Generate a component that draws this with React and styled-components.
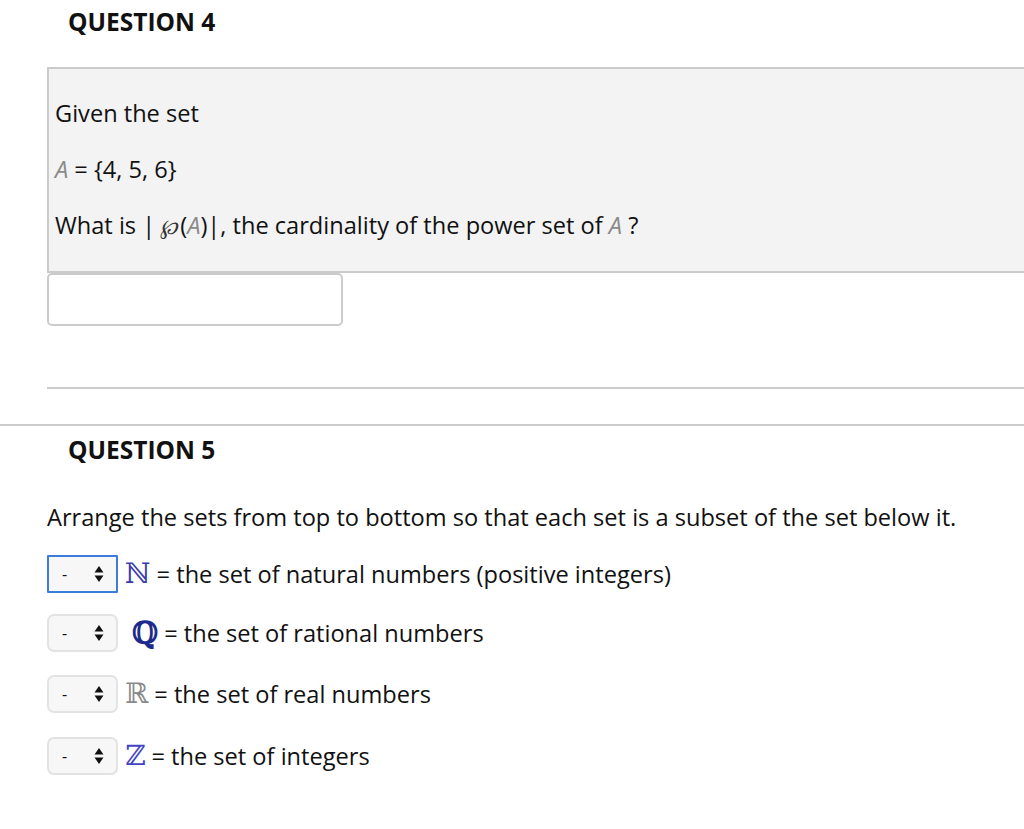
import React from 'react'
import styled, { createGlobalStyle } from 'styled-components'

const Global = createGlobalStyle`
  html, body {
    margin: 0;
    padding: 0;
    background: #fff;
    font-family: "Open Sans", "Liberation Sans", sans-serif;
    color: #111;
  }
`

const Page = styled.div`
  width: 1024px;
  overflow: hidden;
`

const Section = styled.div`
  padding-left: 47px;
  padding-top: ${p => p.top}px;
`

const Heading = styled.h2`
  margin: 0;
  padding-left: 21px;
  font-size: 24.5px;
  font-weight: 700;
  line-height: 44px;
  color: #111;
`

const QuestionBox = styled.div`
  margin-top: 23px;
  background: #f3f3f3;
  border-top: 2px solid #cbcbcb;
  border-left: 2px solid #cbcbcb;
  border-bottom: 2px solid #cbcbcb;
  padding: 16px 0 16px 6px;
`

const Para = styled.p`
  margin: 0;
  font-size: 23.6px;
  line-height: 56px;
  white-space: nowrap;
`

const Var = styled.i`
  color: #8a8a8a;
  font-style: italic;
`

const Weier = styled.span`
  font-family: "DejaVu Serif", serif;
  font-style: italic;
  font-size: 21px;
  color: #333;
  margin: 0 2px 0 5px;
`

const AnswerInput = styled.div`
  width: 292px;
  height: 49px;
  border: 2px solid #cbcbcb;
  border-radius: 5px;
  background: #fff;
`

const Rule = styled.div`
  height: 2px;
  background: #cbcbcb;
  margin-left: ${p => p.left}px;
  margin-top: ${p => p.gap}px;
`

const Prompt = styled.p`
  margin: 29px 0 0 0;
  font-size: 23.6px;
  line-height: 32px;
  white-space: nowrap;
`

const Options = styled.div`
  margin-top: 11px;
  display: flex;
  flex-direction: column;
`

const Row = styled.div`
  display: flex;
  align-items: center;
  height: ${p => p.h}px;
`

const Select = styled.div`
  box-sizing: border-box;
  flex: none;
  width: 71px;
  height: 38px;
  display: flex;
  align-items: center;
  justify-content: space-between;
  padding: 0 12px 0 13px;
  background: #f7f7f7;
  border: 2px solid ${p => (p.focused ? '#3b7dd8' : '#e3e3e3')};
  border-radius: ${p => (p.focused ? '1px' : '7px')};
  font-size: 16px;
`

const Label = styled.span`
  font-size: 23.6px;
  margin-left: ${p => p.gap}px;
  display: flex;
  align-items: center;
  white-space: nowrap;
`

const Sym = styled.span`
  font-family: "DejaVu Serif", serif;
  font-size: ${p => (p.bold ? 30 : 28)}px;
  color: ${p => p.color};
  font-weight: ${p => (p.bold ? 700 : 400)};
  margin-right: 6px;
  line-height: 1;
`

const Arrows = () => (
  <svg width="10" height="18" viewBox="0 0 10 18">
    <path d="M5 1 L9.5 7.5 L0.5 7.5 Z" fill="#111" />
    <path d="M5 17 L9.5 10.5 L0.5 10.5 Z" fill="#111" />
  </svg>
)

const options = [
  { sym: 'ℕ', color: '#3a3aa8', text: 'the set of natural numbers (positive integers)', h: 60, gap: 7, focused: true },
  { sym: 'ℚ', color: '#1c2a8c', bold: true, text: 'the set of rational numbers', h: 58, gap: 14 },
  { sym: 'ℝ', color: '#8a8a8a', text: 'the set of real numbers', h: 64, gap: 7 },
  { sym: 'ℤ', color: '#4343c4', text: 'the set of integers', h: 60, gap: 7 },
]

export default function App() {
  return (
    <Page>
      <Global />
      <Section top={0}>
        <Heading>QUESTION 4</Heading>
        <QuestionBox>
          <Para>Given the set</Para>
          <Para>
            <Var>A</Var> = {'{'}4, 5, 6{'}'}
          </Para>
          <Para>
            What is |<Weier>℘</Weier>(<Var>A</Var>)|, the cardinality of the power set of <Var>A</Var> ?
          </Para>
        </QuestionBox>
        <AnswerInput />
        <Rule left={0} gap={61} />
      </Section>
      <Rule left={0} gap={35} />
      <Section top={2}>
        <Heading>QUESTION 5</Heading>
        <Prompt>Arrange the sets from top to bottom so that each set is a subset of the set below it.</Prompt>
        <Options>
          {options.map(o => (
            <Row key={o.sym} h={o.h}>
              <Select focused={o.focused}>
                <span>-</span>
                <Arrows />
              </Select>
              <Label gap={o.gap}>
                <Sym color={o.color} bold={o.bold}>{o.sym}</Sym>= {o.text}
              </Label>
            </Row>
          ))}
        </Options>
      </Section>
    </Page>
  )
}
